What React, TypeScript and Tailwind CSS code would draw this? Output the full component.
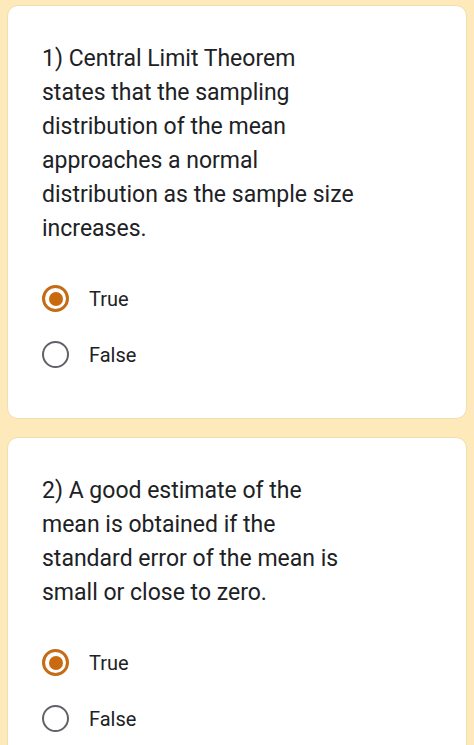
import React from "react";

interface Question {
  id: number;
  lines: string[];
  answer: "True" | "False";
}

const questions: Question[] = [
  {
    id: 1,
    lines: [
      "1) Central Limit Theorem",
      "states that the sampling",
      "distribution of the mean",
      "approaches a normal",
      "distribution as the sample size",
      "increases.",
    ],
    answer: "True",
  },
  {
    id: 2,
    lines: [
      "2) A good estimate of the",
      "mean is obtained if the",
      "standard error of the mean is",
      "small or close to zero.",
    ],
    answer: "True",
  },
];

const Radio: React.FC<{ checked: boolean }> = ({ checked }) =>
  checked ? (
    <span className="flex items-center justify-center w-[27px] h-[27px] rounded-full border-[3px] border-[#c46c16]">
      <span className="w-[14px] h-[14px] rounded-full bg-[#c96a10]" />
    </span>
  ) : (
    <span className="w-[27px] h-[27px] rounded-full border-[2.5px] border-[#5f6368]" />
  );

const QuestionCard: React.FC<{ q: Question; last?: boolean }> = ({ q, last }) => (
  <div
    className={`bg-white rounded-[11px] border border-[#f2dfae] pl-[34px] pr-6 pt-[36px] ${
      last ? "pb-[60px]" : "pb-[49px]"
    }`}
  >
    <p className="text-[23px] leading-[34px] text-[#202124] whitespace-nowrap">
      {q.lines.map((l, i) => (
        <span key={i} className="block">
          {l}
        </span>
      ))}
    </p>
    <div className="mt-[38px] flex flex-col gap-[27px]">
      {(["True", "False"] as const).map((opt) => (
        <label key={opt} className="flex items-center gap-[20px] h-[29px]">
          <Radio checked={q.answer === opt} />
          <span className="text-[20px] text-[#202124]">{opt}</span>
        </label>
      ))}
    </div>
  </div>
);

export default function App() {
  return (
    <div
      className="w-[474px] h-[745px] overflow-hidden bg-[#fde9b9] px-[7px] pt-[5px] flex flex-col gap-[18px]"
      style={{ fontFamily: "Roboto, 'Open Sans', sans-serif" }}
    >
      {questions.map((q, i) => (
        <QuestionCard key={q.id} q={q} last={i === questions.length - 1} />
      ))}
    </div>
  );
}
